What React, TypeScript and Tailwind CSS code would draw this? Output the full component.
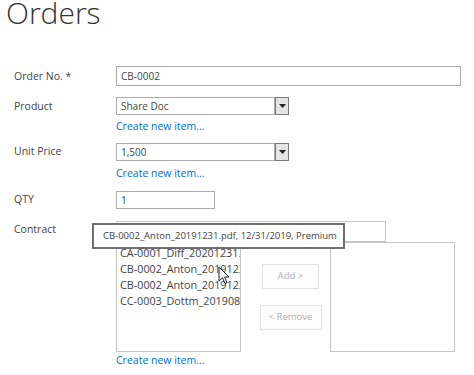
import React from 'react'

const font = "font-['Open_Sans',_'Noto_Sans',_sans-serif]"

function Label({ children, pt = 'pt-[2px]' }: { children: React.ReactNode; pt?: string }) {
  return <div className={`w-[102px] shrink-0 text-[10.5px] leading-[14px] text-[#444] ${pt}`}>{children}</div>
}

function Select({ value }: { value: string }) {
  return (
    <div className="flex h-[18px] w-[173px]">
      <div className="flex flex-1 items-center border border-[#ababab] pl-[4px] text-[10px] text-[#444]">{value}</div>
      <div className="flex w-[14px] items-center justify-center border border-[#7a7a7a] bg-[#e4e4e4]">
        <svg width="7" height="4" viewBox="0 0 7 4">
          <path d="M0 0 H7 L3.5 4 Z" fill="#222" />
        </svg>
      </div>
    </div>
  )
}

function NewItem({ mt }: { mt: string }) {
  return <div className={`${mt} text-[10.5px] leading-[14px] text-[#0072c6]`}>Create new item...</div>
}

export default function App() {
  const items = [
    'CA-0001_Diff_20201231.pdf, 12/31/2020, Basic',
    'CB-0002_Anton_20191231.pdf, 12/31/2019, Premium',
    'CB-0002_Anton_20191231.pdf, 12/31/2019, Basic',
    'CC-0003_Dottm_20190831.pdf, 8/31/2019, Premium',
  ]

  return (
    <div className={`relative h-[375px] w-[474px] overflow-hidden bg-white ${font}`}>
      <h1 className="ml-[6px] text-[30px] font-light leading-[26px] text-[#333]">Orders</h1>

      <div className="pl-[14px]">
        <div className="mt-[40px] flex">
          <Label pt="pt-[3px]">Order No. *</Label>
          <div className="flex h-[20px] w-[345px] items-center border border-[#ababab] pl-[4px] text-[10px] text-[#444]">
            CB-0002
          </div>
        </div>

        <div className="mt-[11px] flex">
          <Label>Product</Label>
          <div>
            <Select value="Share Doc" />
            <NewItem mt="mt-[4px]" />
          </div>
        </div>

        <div className="mt-[10px] flex">
          <Label pt="pt-[1px]">Unit Price</Label>
          <div>
            <Select value="1,500" />
            <NewItem mt="mt-[5px]" />
          </div>
        </div>

        <div className="mt-[11px] flex">
          <Label pt="pt-[1px]">QTY</Label>
          <div className="flex h-[18px] w-[99px] items-center border border-[#ababab] pl-[4px] text-[10px] text-[#444]">
            1
          </div>
        </div>

        <div className="mt-[12px] flex">
          <Label pt="pt-[1px]">Contract</Label>
          <div>
            <div className="h-[21px] w-[270px] border border-[#c6c6c6]" />
            <div className="flex">
              <div className="h-[110px] w-[125px] overflow-hidden border-x border-b border-[#c6c6c6] pl-[3px] pt-[3px]">
                {items.map((t, i) => (
                  <div key={i} className="overflow-hidden whitespace-nowrap text-[10.8px] leading-[16px] text-[#444]">
                    {t}
                  </div>
                ))}
              </div>
              <div className="flex w-[89px] flex-col items-center gap-[16px] pl-[10px] pt-[22px]">
                <div className="flex h-[25px] w-[57px] items-center justify-center border border-[#e1e1e1] bg-[#fdfdfd] text-[9.5px] text-[#b1b1b1]">
                  Add &gt;
                </div>
                <div className="flex h-[25px] w-[62px] items-center justify-center border border-[#e1e1e1] bg-[#fdfdfd] text-[9.5px] text-[#b1b1b1]">
                  &lt; Remove
                </div>
              </div>
              <div className="h-[110px] w-[125px] border border-[#c6c6c6]" />
            </div>
            <NewItem mt="mt-[1px]" />
          </div>
        </div>
      </div>

      <div className="absolute left-[92px] top-[223px] flex h-[26px] w-[253px] items-center border-2 border-[#6e6e6e] bg-white pl-[9px] text-[9.5px] text-[#444]">
        CB-0002_Anton_20191231.pdf, 12/31/2019, Premium
      </div>

      <svg className="absolute left-[218px] top-[266px]" width="13" height="19" viewBox="0 0 13 19">
        <path d="M1 1 L1 15 L4.5 11.8 L7 17.5 L9 16.6 L6.6 11 L11 11 Z" fill="#fff" stroke="#222" strokeWidth="1" strokeLinejoin="round" />
      </svg>
    </div>
  )
}
